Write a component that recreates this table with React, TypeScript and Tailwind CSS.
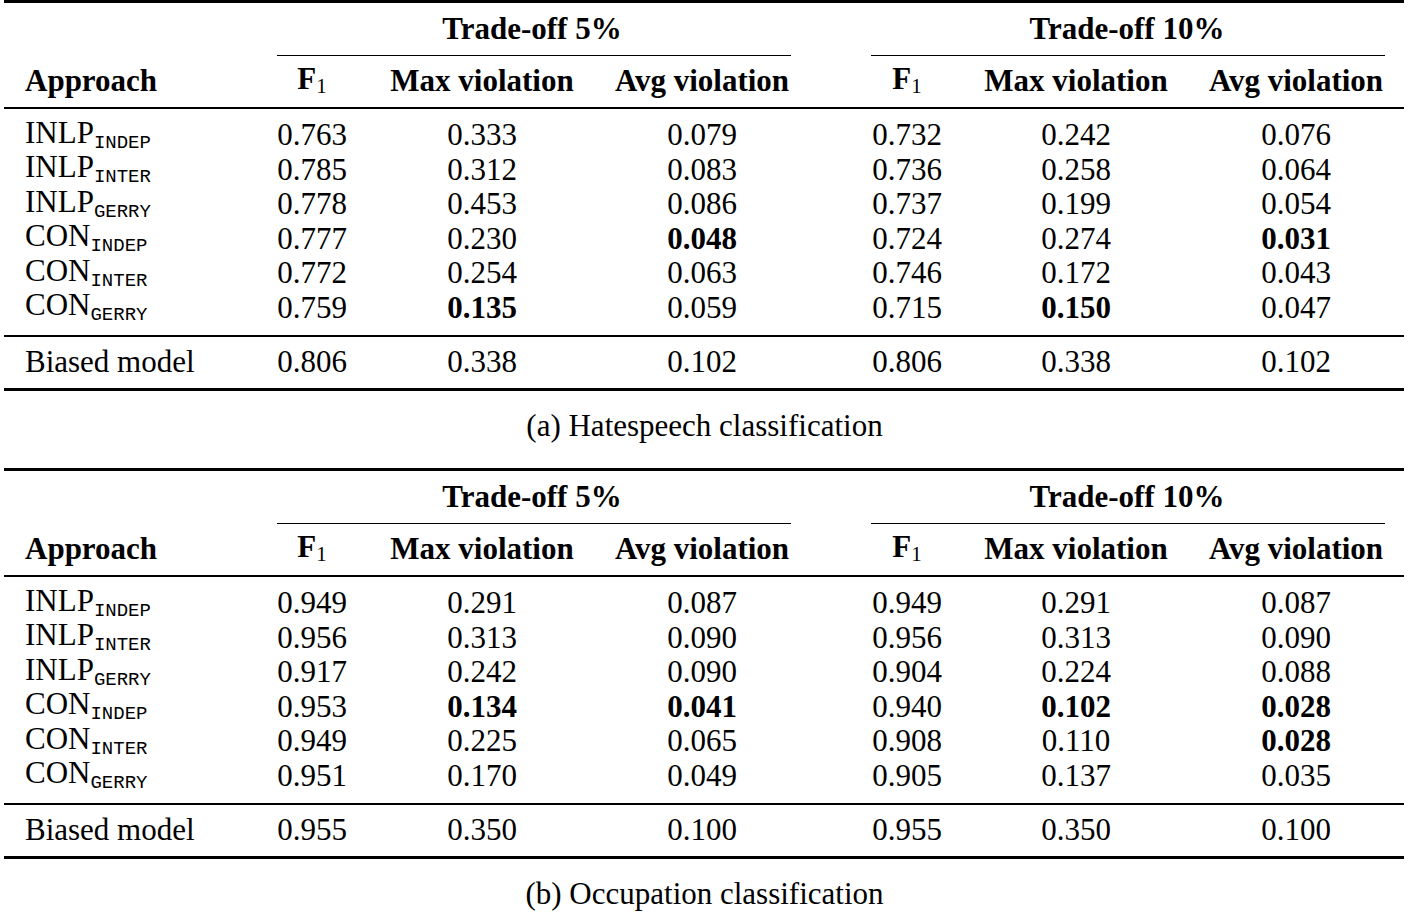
import React from "react";

const COLS =
  "grid grid-cols-[252px_112px_228px_212px_42px_114px_224px_216px]";

type Row = { name: string; sub?: string; vals: string[] };

const t1: Row[] = [
  { name: "INLP", sub: "INDEP", vals: ["0.763", "0.333", "0.079", "0.732", "0.242", "0.076"] },
  { name: "INLP", sub: "INTER", vals: ["0.785", "0.312", "0.083", "0.736", "0.258", "0.064"] },
  { name: "INLP", sub: "GERRY", vals: ["0.778", "0.453", "0.086", "0.737", "0.199", "0.054"] },
  { name: "CON", sub: "INDEP", vals: ["0.777", "0.230", "*0.048", "0.724", "0.274", "*0.031"] },
  { name: "CON", sub: "INTER", vals: ["0.772", "0.254", "0.063", "0.746", "0.172", "0.043"] },
  { name: "CON", sub: "GERRY", vals: ["0.759", "*0.135", "0.059", "0.715", "*0.150", "0.047"] },
];
const b1: Row = { name: "Biased model", vals: ["0.806", "0.338", "0.102", "0.806", "0.338", "0.102"] };

const t2: Row[] = [
  { name: "INLP", sub: "INDEP", vals: ["0.949", "0.291", "0.087", "0.949", "0.291", "0.087"] },
  { name: "INLP", sub: "INTER", vals: ["0.956", "0.313", "0.090", "0.956", "0.313", "0.090"] },
  { name: "INLP", sub: "GERRY", vals: ["0.917", "0.242", "0.090", "0.904", "0.224", "0.088"] },
  { name: "CON", sub: "INDEP", vals: ["0.953", "*0.134", "*0.041", "0.940", "*0.102", "*0.028"] },
  { name: "CON", sub: "INTER", vals: ["0.949", "0.225", "0.065", "0.908", "0.110", "*0.028"] },
  { name: "CON", sub: "GERRY", vals: ["0.951", "0.170", "0.049", "0.905", "0.137", "0.035"] },
];
const b2: Row = { name: "Biased model", vals: ["0.955", "0.350", "0.100", "0.955", "0.350", "0.100"] };

function Val({ v }: { v: string }) {
  const bold = v.startsWith("*");
  return (
    <div className={"text-center " + (bold ? "font-bold" : "")}>
      {bold ? v.slice(1) : v}
    </div>
  );
}

function DataRow({ r }: { r: Row }) {
  return (
    <div className={COLS + " h-[34.6px] items-center leading-[31px]"}>
      <div className="pl-[21px] whitespace-nowrap">
        {r.name}
        {r.sub && (
          <span className="font-['Liberation_Mono',monospace] text-[19px] leading-[19px] align-[-5px]">
            {r.sub}
          </span>
        )}
      </div>
      <Val v={r.vals[0]} />
      <Val v={r.vals[1]} />
      <Val v={r.vals[2]} />
      <div />
      <Val v={r.vals[3]} />
      <Val v={r.vals[4]} />
      <Val v={r.vals[5]} />
    </div>
  );
}

function F1() {
  return (
    <div className="text-center font-bold">
      F<span className="font-normal text-[21px] leading-[21px] align-[-4px]">1</span>
    </div>
  );
}

function Block({ rows, biased, caption }: { rows: Row[]; biased: Row; caption: string }) {
  return (
    <div className="h-[468px] flex flex-col">
      <div className="ml-[4px] w-[1400px]">
        <div className="h-[3px] bg-black" />
        <div className={COLS + " h-[52px] items-center pb-[2px] leading-[31px] font-bold"}>
          <div />
          <div className="col-span-3 text-center">Trade-off 5%</div>
          <div />
          <div className="col-span-3 text-center">Trade-off 10%</div>
        </div>
        <div className={COLS + " h-[1px]"}>
          <div />
          <div className="col-span-3 ml-[21px] mr-[17px] bg-black" />
          <div />
          <div className="col-span-3 ml-[21px] mr-[19px] bg-black" />
        </div>
        <div className={COLS + " h-[51px] items-center pb-[3px] leading-[31px] font-bold"}>
          <div className="pl-[21px]">Approach</div>
          <F1 />
          <div className="text-center">Max violation</div>
          <div className="text-center">Avg violation</div>
          <div />
          <F1 />
          <div className="text-center">Max violation</div>
          <div className="text-center">Avg violation</div>
        </div>
        <div className="h-[2px] bg-black" />
        <div className="pt-[7.5px] pb-[10.9px]">
          {rows.map((r, i) => (
            <DataRow key={i} r={r} />
          ))}
        </div>
        <div className="h-[2px] bg-black" />
        <div className="pt-[7px] pb-[9.4px]">
          <DataRow r={biased} />
        </div>
        <div className="h-[3px] bg-black" />
      </div>
      <div className="h-[77px] pt-[19.5px] text-center leading-[31px]">{caption}</div>
    </div>
  );
}

export default function App() {
  return (
    <div className="w-[1409px] h-[912px] overflow-hidden bg-white text-black font-['Liberation_Serif','Times_New_Roman',serif] text-[31px]">
      <Block rows={t1} biased={b1} caption="(a) Hatespeech classification" />
      <Block rows={t2} biased={b2} caption="(b) Occupation classification" />
    </div>
  );
}
